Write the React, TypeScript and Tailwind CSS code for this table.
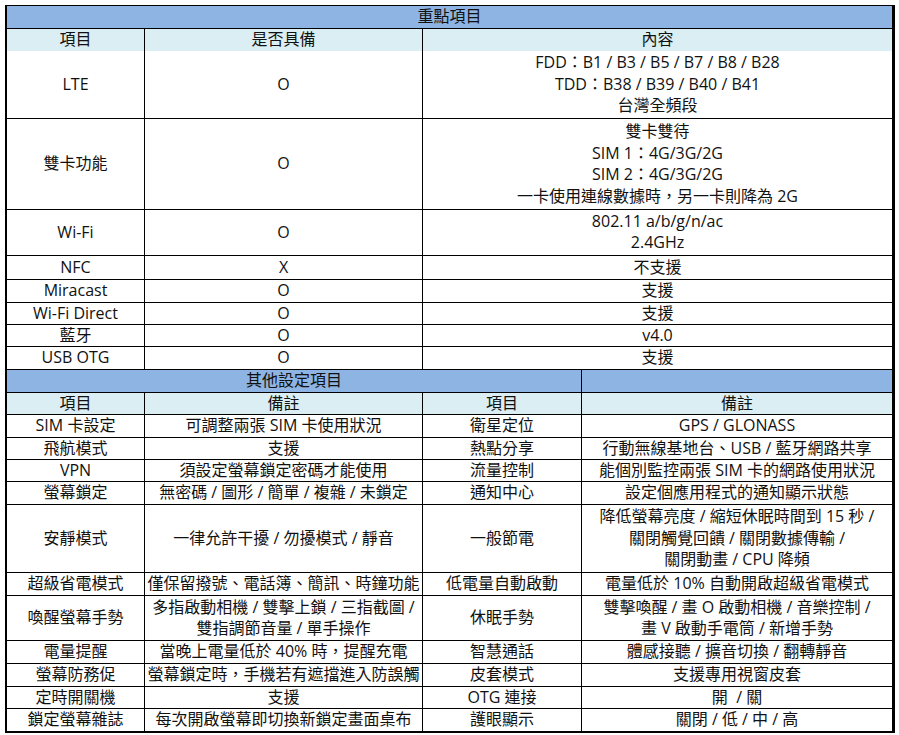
const cols = "grid grid-cols-[137px_277px_158px_310px] gap-px"

type Row = { h: string; cells: string[] }

const topRows: Row[] = [
  { h: "h-[67.5px]", cells: ["LTE", "O", "FDD：B1 / B3 / B5 / B7 / B8 / B28\nTDD：B38 / B39 / B40 / B41\n台灣全頻段"] },
  { h: "h-[90px]", cells: ["雙卡功能", "O", "雙卡雙待\nSIM 1：4G/3G/2G\nSIM 2：4G/3G/2G\n一卡使用連線數據時，另一卡則降為 2G"] },
  { h: "h-[44.5px]", cells: ["Wi-Fi", "O", "802.11 a/b/g/n/ac\n2.4GHz"] },
  { h: "h-[23.5px]", cells: ["NFC", "X", "不支援"] },
  { h: "h-[21.5px]", cells: ["Miracast", "O", "支援"] },
  { h: "h-[21px]", cells: ["Wi-Fi Direct", "O", "支援"] },
  { h: "h-[21.5px]", cells: ["藍牙", "O", "v4.0"] },
  { h: "h-[21.5px]", cells: ["USB OTG", "O", "支援"] },
]

const otherRows: Row[] = [
  { h: "h-[21.5px]", cells: ["SIM 卡設定", "可調整兩張 SIM 卡使用狀況", "衛星定位", "GPS / GLONASS"] },
  { h: "h-[21px]", cells: ["飛航模式", "支援", "熱點分享", "行動無線基地台、USB / 藍牙網路共享"] },
  { h: "h-[21.5px]", cells: ["VPN", "須設定螢幕鎖定密碼才能使用", "流量控制", "能個別監控兩張 SIM 卡的網路使用狀況"] },
  { h: "h-[22px]", cells: ["螢幕鎖定", "無密碼 / 圖形 / 簡單 / 複雜 / 未鎖定", "通知中心", "設定個應用程式的通知顯示狀態"] },
  { h: "h-[67px]", cells: ["安靜模式", "一律允許干擾 / 勿擾模式 / 靜音", "一般節電", "降低螢幕亮度 / 縮短休眠時間到 15 秒 /\n關閉觸覺回饋 / 關閉數據傳輸 /\n關閉動畫 / CPU 降頻"] },
  { h: "h-[22px]", cells: ["超級省電模式", "僅保留撥號、電話簿、簡訊、時鐘功能", "低電量自動啟動", "電量低於 10% 自動開啟超級省電模式"] },
  { h: "h-[44px]", cells: ["喚醒螢幕手勢", "多指啟動相機 / 雙擊上鎖 / 三指截圖 /\n雙指調節音量 / 單手操作", "休眠手勢", "雙擊喚醒 / 畫 O 啟動相機 / 音樂控制 /\n畫 V 啟動手電筒 / 新增手勢"] },
  { h: "h-[22px]", cells: ["電量提醒", "當晚上電量低於 40% 時，提醒充電", "智慧通話", "體感接聽 / 擴音切換 / 翻轉靜音"] },
  { h: "h-[21.5px]", cells: ["螢幕防務促", "螢幕鎖定時，手機若有遮擋進入防誤觸", "皮套模式", "支援專用視窗皮套"] },
  { h: "h-[21.5px]", cells: ["定時開關機", "支援", "OTG 連接", "開  / 關"] },
  { h: "h-[21px]", cells: ["鎖定螢幕雜誌", "每次開啟螢幕即切換新鎖定畫面桌布", "護眼顯示", "關閉 / 低 / 中 / 高"] },
]

function Cell({ text, span, bg = "bg-white" }: { text: string; span?: string; bg?: string }) {
  return (
    <div className={`${bg} ${span ?? ""} flex flex-col items-center justify-center text-center whitespace-pre leading-[21.5px]`}>
      {text}
    </div>
  )
}

export default function App() {
  return (
    <div className="bg-white min-h-screen pl-[5px] pt-[5px]">
      <div
        className="w-[890px] flex flex-col gap-px bg-black border-t border-l-2 border-r-[3px] border-b-[3px] border-black text-[16px] text-[#111]"
        style={{ fontFamily: '"Open Sans", "Noto Sans CJK TC", sans-serif' }}
      >
        <div className={`${cols} h-[22px]`}>
          <Cell text="重點項目" span="col-span-4" bg="bg-[#8db4e2]" />
        </div>
        <div className={`${cols} h-[20.5px]`}>
          <Cell text="項目" bg="bg-[#daeef3]" />
          <Cell text="是否具備" bg="bg-[#daeef3]" />
          <Cell text="內容" span="col-span-2" bg="bg-[#daeef3]" />
        </div>
        {topRows.map((r) => (
          <div key={r.cells[0]} className={`${cols} ${r.h}`}>
            <Cell text={r.cells[0]} />
            <Cell text={r.cells[1]} />
            <Cell text={r.cells[2]} span="col-span-2" />
          </div>
        ))}
        <div className={`${cols} h-[22px]`}>
          <Cell text="其他設定項目" span="col-span-3" bg="bg-[#8db4e2]" />
          <Cell text="" bg="bg-[#8db4e2]" />
        </div>
        <div className={`${cols} h-[21.5px]`}>
          <Cell text="項目" bg="bg-[#daeef3]" />
          <Cell text="備註" bg="bg-[#daeef3]" />
          <Cell text="項目" bg="bg-[#daeef3]" />
          <Cell text="備註" bg="bg-[#daeef3]" />
        </div>
        {otherRows.map((r) => (
          <div key={r.cells[0]} className={`${cols} ${r.h}`}>
            {r.cells.map((c, i) => (
              <Cell key={i} text={c} />
            ))}
          </div>
        ))}
      </div>
    </div>
  )
}
